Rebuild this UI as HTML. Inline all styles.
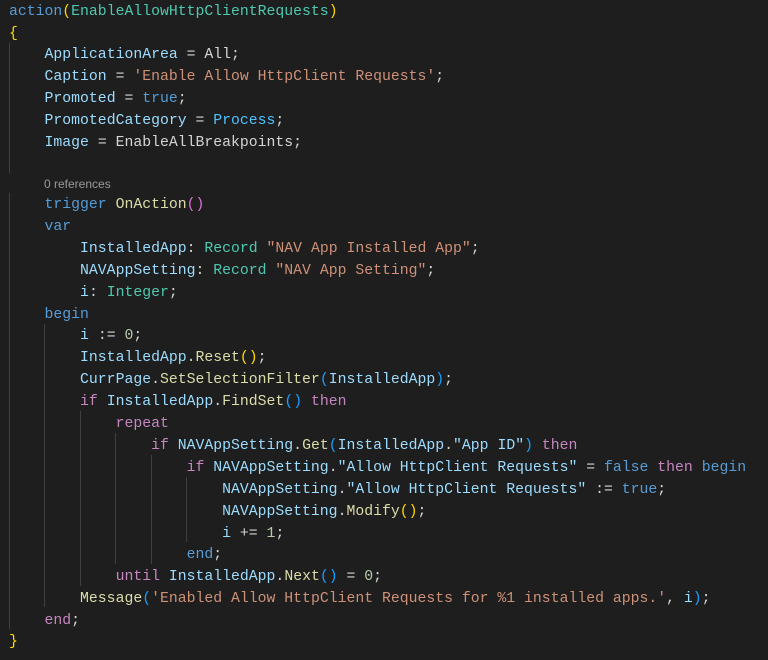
<!DOCTYPE html>
<html><head><meta charset="utf-8"><style>
html,body{margin:0;padding:0;background:#1e1e1e;width:768px;height:660px;overflow:hidden}
#c{position:absolute;left:9px;top:2px;font-family:"Liberation Mono",monospace;font-size:14.8px;color:#d4d4d4;white-space:pre}
.l{position:absolute;left:0;height:22px;line-height:22px}
.k{color:#569cd6}.v{color:#9cdcfe}.s{color:#ce9178}.f{color:#dcdcaa}.p{color:#c586c0}.n{color:#b5cea8}.t{color:#4ec9b0}
.g{color:#ffd700}.m{color:#da70d6}.b{color:#179fff}.e{color:#4fc1ff}
.cl{position:absolute;left:44px;top:177px;font-family:"Liberation Sans",sans-serif;font-size:12px;color:#999;white-space:pre}
.ig{position:absolute;width:1px;background:#404040}
</style></head><body>
<div class="ig" style="left:9px;top:43px;height:130px"></div>
<div class="ig" style="left:9px;top:193px;height:436px"></div>
<div class="ig" style="left:44px;top:324px;height:283px"></div>
<div class="ig" style="left:80px;top:411px;height:175px"></div>
<div class="ig" style="left:115px;top:433px;height:131px"></div>
<div class="ig" style="left:151px;top:455px;height:109px"></div>
<div class="ig" style="left:186px;top:477px;height:65px"></div>
<div class="cl">0 references</div>
<div id="c">
<div class="l" style="top:-1px"><span class="k">action</span><span class="g">(</span><span class="t">EnableAllowHttpClientRequests</span><span class="g">)</span></div>
<div class="l" style="top:21px"><span class="g">{</span></div>
<div class="l" style="top:42px">    <span class="v">ApplicationArea</span> = All;</div>
<div class="l" style="top:64px">    <span class="v">Caption</span> = <span class="s">'Enable Allow HttpClient Requests'</span>;</div>
<div class="l" style="top:86px">    <span class="v">Promoted</span> = <span class="k">true</span>;</div>
<div class="l" style="top:108px">    <span class="v">PromotedCategory</span> = <span class="e">Process</span>;</div>
<div class="l" style="top:130px">    <span class="v">Image</span> = EnableAllBreakpoints;</div>
<div class="l" style="top:192px">    <span class="k">trigger</span> <span class="f">OnAction</span><span class="m">()</span></div>
<div class="l" style="top:214px">    <span class="k">var</span></div>
<div class="l" style="top:236px">        <span class="v">InstalledApp</span>: <span class="t">Record</span> <span class="s">"NAV App Installed App"</span>;</div>
<div class="l" style="top:258px">        <span class="v">NAVAppSetting</span>: <span class="t">Record</span> <span class="s">"NAV App Setting"</span>;</div>
<div class="l" style="top:280px">        <span class="v">i</span>: <span class="t">Integer</span>;</div>
<div class="l" style="top:302px">    <span class="k">begin</span></div>
<div class="l" style="top:323px">        <span class="v">i</span> := <span class="n">0</span>;</div>
<div class="l" style="top:345px">        <span class="v">InstalledApp</span>.<span class="f">Reset</span><span class="g">()</span>;</div>
<div class="l" style="top:367px">        <span class="v">CurrPage</span>.<span class="f">SetSelectionFilter</span><span class="b">(</span><span class="v">InstalledApp</span><span class="b">)</span>;</div>
<div class="l" style="top:389px">        <span class="p">if</span> <span class="v">InstalledApp</span>.<span class="f">FindSet</span><span class="b">()</span> <span class="p">then</span></div>
<div class="l" style="top:411px">            <span class="p">repeat</span></div>
<div class="l" style="top:433px">                <span class="p">if</span> <span class="v">NAVAppSetting</span>.<span class="f">Get</span><span class="b">(</span><span class="v">InstalledApp</span>.<span class="v">"App ID"</span><span class="b">)</span> <span class="p">then</span></div>
<div class="l" style="top:455px">                    <span class="p">if</span> <span class="v">NAVAppSetting</span>.<span class="v">"Allow HttpClient Requests"</span> = <span class="k">false</span> <span class="p">then</span> <span class="k">begin</span></div>
<div class="l" style="top:477px">                        <span class="v">NAVAppSetting</span>.<span class="v">"Allow HttpClient Requests"</span> := <span class="k">true</span>;</div>
<div class="l" style="top:499px">                        <span class="v">NAVAppSetting</span>.<span class="f">Modify</span><span class="g">()</span>;</div>
<div class="l" style="top:521px">                        <span class="v">i</span> += <span class="n">1</span>;</div>
<div class="l" style="top:542px">                    <span class="k">end</span>;</div>
<div class="l" style="top:564px">            <span class="p">until</span> <span class="v">InstalledApp</span>.<span class="f">Next</span><span class="b">()</span> = <span class="n">0</span>;</div>
<div class="l" style="top:586px">        <span class="f">Message</span><span class="b">(</span><span class="s">'Enabled Allow HttpClient Requests for %1 installed apps.'</span>, <span class="v">i</span><span class="b">)</span>;</div>
<div class="l" style="top:608px">    <span class="p">end</span>;</div>
<div class="l" style="top:629px"><span class="g">}</span></div>
</div>
</body></html>
